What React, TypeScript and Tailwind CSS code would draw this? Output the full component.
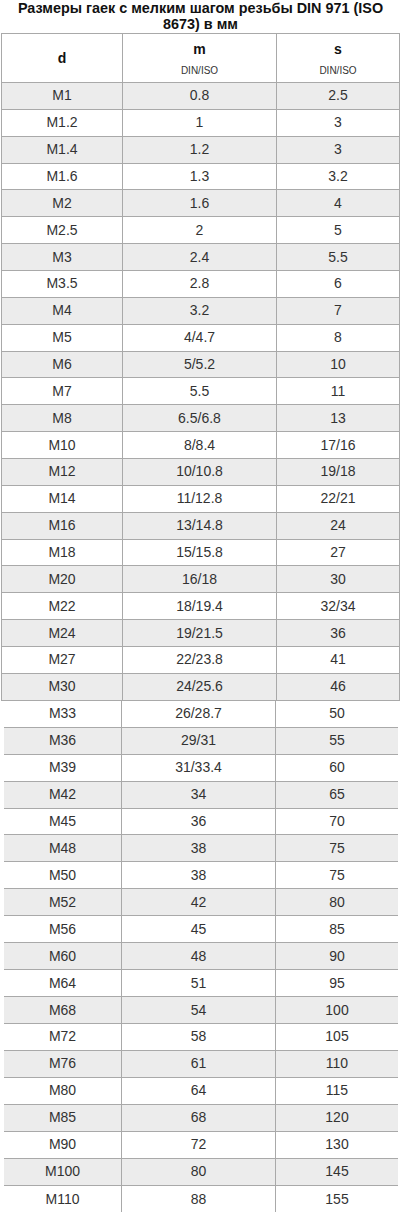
const upperRows: [string, string, string][] = [
  ["M1", "0.8", "2.5"],
  ["M1.2", "1", "3"],
  ["M1.4", "1.2", "3"],
  ["M1.6", "1.3", "3.2"],
  ["M2", "1.6", "4"],
  ["M2.5", "2", "5"],
  ["M3", "2.4", "5.5"],
  ["M3.5", "2.8", "6"],
  ["M4", "3.2", "7"],
  ["M5", "4/4.7", "8"],
  ["M6", "5/5.2", "10"],
  ["M7", "5.5", "11"],
  ["M8", "6.5/6.8", "13"],
  ["M10", "8/8.4", "17/16"],
  ["M12", "10/10.8", "19/18"],
  ["M14", "11/12.8", "22/21"],
  ["M16", "13/14.8", "24"],
  ["M18", "15/15.8", "27"],
  ["M20", "16/18", "30"],
  ["M22", "18/19.4", "32/34"],
  ["M24", "19/21.5", "36"],
  ["M27", "22/23.8", "41"],
  ["M30", "24/25.6", "46"],
];

const lowerRows: [string, string, string][] = [
  ["M33", "26/28.7", "50"],
  ["M36", "29/31", "55"],
  ["M39", "31/33.4", "60"],
  ["M42", "34", "65"],
  ["M45", "36", "70"],
  ["M48", "38", "75"],
  ["M50", "38", "75"],
  ["M52", "42", "80"],
  ["M56", "45", "85"],
  ["M60", "48", "90"],
  ["M64", "51", "95"],
  ["M68", "54", "100"],
  ["M72", "58", "105"],
  ["M76", "61", "110"],
  ["M80", "64", "115"],
  ["M85", "68", "120"],
  ["M90", "72", "130"],
  ["M100", "80", "145"],
  ["M110", "88", "155"],
];

function Row({
  cells,
  gray,
  first,
  last,
  h,
}: {
  cells: [string, string, string];
  gray: boolean;
  first: string;
  last?: boolean;
  h: string;
}) {
  return (
    <div
      className={`flex ${h} ${last ? "" : "border-b border-[#a9a9a9]"} ${
        gray ? "bg-[#ececec]" : "bg-white"
      }`}
    >
      <div className={`${first} flex items-center justify-center border-r border-[#a9a9a9]`}>
        {cells[0]}
      </div>
      <div className="w-[154px] flex items-center justify-center border-r border-[#a9a9a9]">
        {cells[1]}
      </div>
      <div className="flex-1 flex items-center justify-center">{cells[2]}</div>
    </div>
  );
}

export default function App() {
  return (
    <div
      className="w-[401px] h-[1212px] overflow-hidden bg-white text-[#333] text-[14px]"
      style={{ fontFamily: '"Liberation Sans", Arial, sans-serif' }}
    >
      {/* Title */}
      <div className="h-[33px] text-center text-[14.4px] font-bold leading-[16px] text-[#111]">
        Размеры гаек с мелким шагом резьбы DIN 971 (ISO
        <br />
        8673) в мм
      </div>

      {/* Upper table */}
      <div className="ml-px w-[399px] border-x border-t border-[#a9a9a9]">
        <div className="flex h-[49px] border-b border-[#a9a9a9] bg-white">
          <div className="w-[121px] flex items-center justify-center border-r border-[#a9a9a9] font-bold text-[14px] text-[#111]">
            d
          </div>
          <div className="w-[154px] flex flex-col items-center border-r border-[#a9a9a9]">
            <span className="mt-[7px] font-bold text-[14px] leading-[16px] text-[#111]">m</span>
            <span className="mt-[8px] text-[10px] leading-[11px]">DIN/ISO</span>
          </div>
          <div className="flex-1 flex flex-col items-center">
            <span className="mt-[7px] font-bold text-[14px] leading-[16px] text-[#111]">s</span>
            <span className="mt-[8px] text-[10px] leading-[11px]">DIN/ISO</span>
          </div>
        </div>
        {upperRows.map((r, i) => (
          <Row key={r[0]} cells={r} gray={i % 2 === 0} first="w-[121px]" h="h-[26.87px]" />
        ))}
      </div>

      {/* Lower table */}
      <div className="ml-[4px] w-[394px]">
        {lowerRows.map((r, i) => (
          <Row
            key={r[0]}
            cells={r}
            gray={i % 2 === 1}
            first="w-[118px]"
            last={i === lowerRows.length - 1}
            h="h-[26.94px]"
          />
        ))}
      </div>
    </div>
  );
}
